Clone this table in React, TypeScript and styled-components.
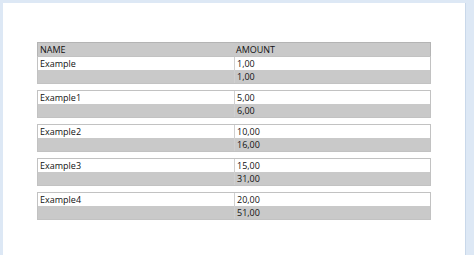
import React from "react";
import styled, { createGlobalStyle } from "styled-components";

const GlobalStyle = createGlobalStyle`
  html, body {
    margin: 0;
    padding: 0;
    background: #dfe9f5;
  }
  body {
    font-family: "Open Sans", "Noto Sans", sans-serif;
  }
`;

const Frame = styled.div`
  width: 474px;
  height: 255px;
  box-sizing: border-box;
  padding: 3px 8px 0 3px;
  background: #dde8f5;
  display: flex;
`;

const Page = styled.div`
  flex: 1;
  background: #ffffff;
  border-right: 1px solid #c9d8ea;
  padding: 39px 0 0 34px;
`;

const Table = styled.div`
  width: 394px;
  display: flex;
  flex-direction: column;
  gap: 6px;
`;

const Header = styled.div`
  display: grid;
  grid-template-columns: 1fr 1fr;
  background: #c9c9c9;
  border: 1px solid #b4b4b4;
  border-bottom: none;
  height: 13px;
  margin-bottom: -6px;
`;

const Group = styled.div`
  border: 1px solid #c2c2c2;
  display: flex;
  flex-direction: column;
`;

const Row = styled.div<{ $shaded?: boolean }>`
  display: grid;
  grid-template-columns: 1fr 1fr;
  height: 13px;
  background: ${(p) => (p.$shaded ? "#c9c9c9" : "#ffffff")};
`;

const Cell = styled.div<{ $divider?: boolean }>`
  font-size: 9px;
  line-height: 13px;
  color: #111111;
  padding-left: 2px;
  white-space: nowrap;
  border-left: ${(p) => (p.$divider ? "1px solid #d0d0d0" : "none")};
`;

const items = [
  { name: "Example", amount: "1,00", total: "1,00" },
  { name: "Example1", amount: "5,00", total: "6,00" },
  { name: "Example2", amount: "10,00", total: "16,00" },
  { name: "Example3", amount: "15,00", total: "31,00" },
  { name: "Example4", amount: "20,00", total: "51,00" },
];

export default function App() {
  return (
    <>
      <GlobalStyle />
      <Frame>
        <Page>
          <Table>
            <Header>
              <Cell>NAME</Cell>
              <Cell>AMOUNT</Cell>
            </Header>
            {items.map((item) => (
              <Group key={item.name}>
                <Row>
                  <Cell>{item.name}</Cell>
                  <Cell $divider>{item.amount}</Cell>
                </Row>
                <Row $shaded>
                  <Cell />
                  <Cell $divider>{item.total}</Cell>
                </Row>
              </Group>
            ))}
          </Table>
        </Page>
      </Frame>
    </>
  );
}
